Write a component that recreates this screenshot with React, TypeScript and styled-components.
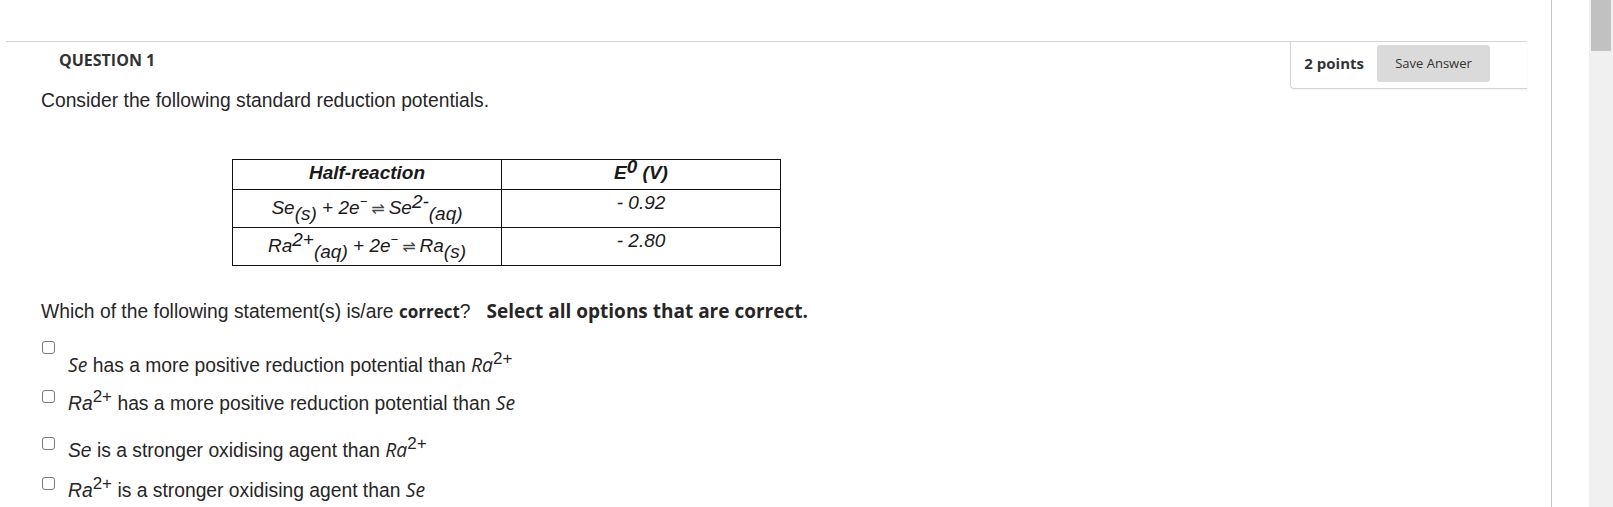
import React from 'react';
import styled, { createGlobalStyle } from 'styled-components';

const GlobalStyle = createGlobalStyle`
  html, body {
    margin: 0;
    padding: 0;
    background: #fff;
    overflow: hidden;
  }
  body {
    font-family: 'Liberation Sans', Arial, sans-serif;
    color: #262626;
  }
`;

type IGapProps = {
  $gap: number;
};

type IHalfReaction = {
  key: string;
  potential: string;
  equation: React.ReactNode;
};

const Page = styled.div`
  display: flex;
  width: 1613px;
  height: 507px;
`;

const Main = styled.main`
  box-sizing: border-box;
  width: 1552px;
  padding-top: 41px;
  border-right: 1px solid #c8c8c8;
`;

const Gutter = styled.div`
  width: 37px;
`;

const ScrollTrack = styled.div`
  box-sizing: border-box;
  width: 24px;
  padding: 0 2px;
  background: #f0f0f0;
`;

const ScrollThumb = styled.div`
  height: 51px;
  background: #c1c1c1;
`;

const QuestionBlock = styled.section`
  margin: 0 24px 0 6px;
  border-top: 1px solid #d4d4d4;
`;

const HeaderRow = styled.div`
  display: flex;
  align-items: flex-start;
`;

const Title = styled.h2`
  margin: 0;
  padding: 7px 0 0 53px;
  font-family: 'Open Sans', sans-serif;
  font-size: 16px;
  font-weight: 700;
  line-height: 22px;
  color: #333;
`;

const PointsBox = styled.div`
  box-sizing: border-box;
  display: flex;
  align-items: center;
  gap: 13px;
  height: 47px;
  margin-left: auto;
  padding: 3px 37px 7px 13px;
  border-left: 1px solid #d6d6d6;
  border-bottom: 1px solid #d6d6d6;
  border-bottom-left-radius: 4px;
  box-shadow: 0 1px 2px rgba(0, 0, 0, 0.06);
`;

const Points = styled.span`
  font-family: 'Open Sans', sans-serif;
  font-size: 15px;
  font-weight: 700;
  color: #333;
  white-space: nowrap;
`;

const SaveButton = styled.button`
  width: 113px;
  height: 37px;
  padding: 0;
  border: none;
  border-radius: 3px;
  background: #dadada;
  font-family: 'Open Sans', sans-serif;
  font-size: 13px;
  color: #333;
`;

const Prompt = styled.p`
  margin: 1px 0 0 35px;
  font-size: 19.3px;
  line-height: 22px;
`;

const ReactionTable = styled.table`
  margin: 47px 0 0 226px;
  border-collapse: collapse;
  table-layout: fixed;
  width: 548px;
  font-size: 19px;
  font-style: italic;
  color: #1a1a1a;
`;

const HeadCell = styled.th`
  height: 27px;
  padding: 2px 0 0;
  border: 1px solid #111;
  font-weight: 700;
  text-align: center;
  vertical-align: top;
  line-height: 21px;
`;

const EquationCell = styled.td`
  height: 37px;
  padding: 0;
  border: 1px solid #111;
  text-align: center;
  vertical-align: middle;
  line-height: 22px;
  white-space: nowrap;
`;

const ValueCell = styled.td`
  padding: 2px 0 0;
  border: 1px solid #111;
  text-align: center;
  vertical-align: top;
  line-height: 21px;
`;

const Sup = styled.sup`
  font-size: 1em;
  line-height: 0;
  vertical-align: 6px;
`;

const Sub = styled.sub`
  font-size: 1em;
  line-height: 0;
  vertical-align: -6px;
`;

const Charge = styled.sup`
  font-size: 13px;
  line-height: 0;
  vertical-align: 8px;
`;

const Harpoons = styled.span`
  margin: 0 4px;
  font-family: 'DejaVu Sans', sans-serif;
  font-size: 16px;
  font-style: normal;
  color: #444;
`;

const QuestionText = styled.p`
  margin: 34px 0 0 35px;
  font-size: 19.3px;
  line-height: 22px;
`;

const Strong = styled.strong`
  font-family: 'Open Sans', sans-serif;
  font-size: ${({ $size }: { $size: number }) => $size}px;
  font-weight: 700;
  color: #262626;
`;

const OptionList = styled.div`
  display: flex;
  flex-direction: column;
  margin: 18px 0 0 36px;
`;

const StackedOption = styled.label`
  display: flex;
  flex-direction: column;
  align-items: flex-start;
`;

const InlineOption = styled.label`
  display: flex;
  align-items: flex-start;
  gap: 13px;
  margin-top: ${({ $gap }: IGapProps) => $gap}px;
`;

const CheckBox = styled.input.attrs({ type: 'checkbox' })`
  appearance: none;
  flex: none;
  box-sizing: border-box;
  width: 13px;
  height: 13px;
  margin: 0;
  border: 1px solid #7a7a7a;
  border-radius: 3px;
  background: #fff;
`;

const OptionText = styled.span`
  font-size: 19.3px;
  line-height: 26px;
  white-space: nowrap;
`;

const StackedText = styled(OptionText)`
  margin: -2px 0 0 26px;
`;

const SansSymbol = styled.i`
  font-family: 'Liberation Sans', Arial, sans-serif;
  font-style: italic;
`;

const HumanistSymbol = styled.i`
  font-family: 'Open Sans', sans-serif;
  font-style: italic;
`;

const OptSup = styled.sup`
  font-size: 17px;
  font-style: normal;
  line-height: 0;
  vertical-align: 8px;
`;

const REACTIONS: IHalfReaction[] = [
  {
    key: 'se',
    potential: '- 0.92',
    equation: (
      <>
        Se<Sub>(s)</Sub> + 2e<Charge>−</Charge>
        <Harpoons>⇌</Harpoons>Se<Sup>2-</Sup>
        <Sub>(aq)</Sub>
      </>
    ),
  },
  {
    key: 'ra',
    potential: '- 2.80',
    equation: (
      <>
        Ra<Sup>2+</Sup>
        <Sub>(aq)</Sub> + 2e<Charge>−</Charge>
        <Harpoons>⇌</Harpoons>Ra<Sub>(s)</Sub>
      </>
    ),
  },
];

function Ra({ humanist }: { humanist?: boolean }) {
  const Symbol = humanist ? HumanistSymbol : SansSymbol;
  return (
    <>
      <Symbol>Ra</Symbol>
      <OptSup>2+</OptSup>
    </>
  );
}

export default function App() {
  return (
    <>
      <GlobalStyle />
      <Page>
        <Main>
          <QuestionBlock>
            <HeaderRow>
              <Title>QUESTION 1</Title>
              <PointsBox>
                <Points>2 points</Points>
                <SaveButton>Save Answer</SaveButton>
              </PointsBox>
            </HeaderRow>

            <Prompt>Consider the following standard reduction potentials.</Prompt>

            <ReactionTable>
              <colgroup>
                <col style={{ width: 269 }} />
                <col style={{ width: 279 }} />
              </colgroup>
              <thead>
                <tr>
                  <HeadCell>Half-reaction</HeadCell>
                  <HeadCell>
                    E<Sup>0</Sup> (V)
                  </HeadCell>
                </tr>
              </thead>
              <tbody>
                {REACTIONS.map(({ key, potential, equation }) => (
                  <tr key={key}>
                    <EquationCell>{equation}</EquationCell>
                    <ValueCell>{potential}</ValueCell>
                  </tr>
                ))}
              </tbody>
            </ReactionTable>

            <QuestionText>
              Which of the following statement(s) is/are <Strong $size={17}>correct</Strong>?
              {'\u00a0\u00a0 '}
              <Strong $size={19}>Select all options that are correct.</Strong>
            </QuestionText>

            <OptionList>
              {/* first answer wraps its text under the box */}
              <StackedOption>
                <CheckBox />
                <StackedText>
                  <HumanistSymbol>Se</HumanistSymbol> has a more positive reduction potential than{' '}
                  <Ra humanist />
                </StackedText>
              </StackedOption>
              <InlineOption $gap={11}>
                <CheckBox />
                <OptionText>
                  <Ra /> has a more positive reduction potential than <HumanistSymbol>Se</HumanistSymbol>
                </OptionText>
              </InlineOption>
              <InlineOption $gap={20}>
                <CheckBox />
                <OptionText>
                  <SansSymbol>Se</SansSymbol> is a stronger oxidising agent than <Ra humanist />
                </OptionText>
              </InlineOption>
              <InlineOption $gap={13}>
                <CheckBox />
                <OptionText>
                  <Ra /> is a stronger oxidising agent than <HumanistSymbol>Se</HumanistSymbol>
                </OptionText>
              </InlineOption>
            </OptionList>
          </QuestionBlock>
        </Main>
        <Gutter />
        <ScrollTrack>
          <ScrollThumb />
        </ScrollTrack>
      </Page>
    </>
  );
}
